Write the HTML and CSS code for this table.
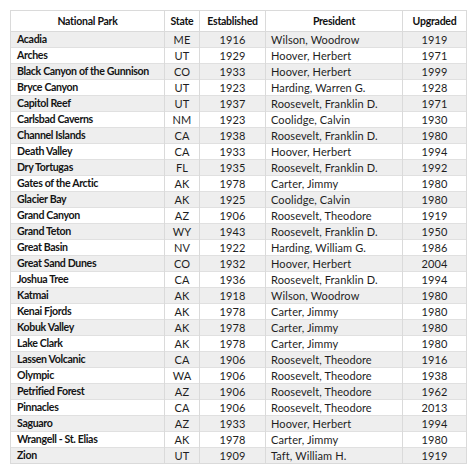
FILE: index.html
```html
<!DOCTYPE html>
<html>
<head>
<meta charset="utf-8">
<link rel="stylesheet" href="styles.css">
</head>
<body>
<table class="parks">
<colgroup>
<col class="c-park"><col class="c-state"><col class="c-est"><col class="c-pres"><col class="c-up">
</colgroup>
<thead>
<tr><th>National Park</th><th>State</th><th>Established</th><th>President</th><th>Upgraded</th></tr>
</thead>
<tbody>
<tr><td class="name">Acadia</td><td>ME</td><td>1916</td><td class="pres">Wilson, Woodrow</td><td>1919</td></tr>
<tr><td class="name">Arches</td><td>UT</td><td>1929</td><td class="pres">Hoover, Herbert</td><td>1971</td></tr>
<tr><td class="name">Black Canyon of the Gunnison</td><td>CO</td><td>1933</td><td class="pres">Hoover, Herbert</td><td>1999</td></tr>
<tr><td class="name">Bryce Canyon</td><td>UT</td><td>1923</td><td class="pres">Harding, Warren G.</td><td>1928</td></tr>
<tr><td class="name">Capitol Reef</td><td>UT</td><td>1937</td><td class="pres">Roosevelt, Franklin D.</td><td>1971</td></tr>
<tr><td class="name">Carlsbad Caverns</td><td>NM</td><td>1923</td><td class="pres">Coolidge, Calvin</td><td>1930</td></tr>
<tr><td class="name">Channel Islands</td><td>CA</td><td>1938</td><td class="pres">Roosevelt, Franklin D.</td><td>1980</td></tr>
<tr><td class="name">Death Valley</td><td>CA</td><td>1933</td><td class="pres">Hoover, Herbert</td><td>1994</td></tr>
<tr><td class="name">Dry Tortugas</td><td>FL</td><td>1935</td><td class="pres">Roosevelt, Franklin D.</td><td>1992</td></tr>
<tr><td class="name">Gates of the Arctic</td><td>AK</td><td>1978</td><td class="pres">Carter, Jimmy</td><td>1980</td></tr>
<tr><td class="name">Glacier Bay</td><td>AK</td><td>1925</td><td class="pres">Coolidge, Calvin</td><td>1980</td></tr>
<tr><td class="name">Grand Canyon</td><td>AZ</td><td>1906</td><td class="pres">Roosevelt, Theodore</td><td>1919</td></tr>
<tr><td class="name">Grand Teton</td><td>WY</td><td>1943</td><td class="pres">Roosevelt, Franklin D.</td><td>1950</td></tr>
<tr><td class="name">Great Basin</td><td>NV</td><td>1922</td><td class="pres">Harding, William G.</td><td>1986</td></tr>
<tr><td class="name">Great Sand Dunes</td><td>CO</td><td>1932</td><td class="pres">Hoover, Herbert</td><td>2004</td></tr>
<tr><td class="name">Joshua Tree</td><td>CA</td><td>1936</td><td class="pres">Roosevelt, Franklin D.</td><td>1994</td></tr>
<tr><td class="name">Katmai</td><td>AK</td><td>1918</td><td class="pres">Wilson, Woodrow</td><td>1980</td></tr>
<tr><td class="name">Kenai Fjords</td><td>AK</td><td>1978</td><td class="pres">Carter, Jimmy</td><td>1980</td></tr>
<tr><td class="name">Kobuk Valley</td><td>AK</td><td>1978</td><td class="pres">Carter, Jimmy</td><td>1980</td></tr>
<tr><td class="name">Lake Clark</td><td>AK</td><td>1978</td><td class="pres">Carter, Jimmy</td><td>1980</td></tr>
<tr><td class="name">Lassen Volcanic</td><td>CA</td><td>1906</td><td class="pres">Roosevelt, Theodore</td><td>1916</td></tr>
<tr><td class="name">Olympic</td><td>WA</td><td>1906</td><td class="pres">Roosevelt, Theodore</td><td>1938</td></tr>
<tr><td class="name">Petrified Forest</td><td>AZ</td><td>1906</td><td class="pres">Roosevelt, Theodore</td><td>1962</td></tr>
<tr><td class="name">Pinnacles</td><td>CA</td><td>1906</td><td class="pres">Roosevelt, Theodore</td><td>2013</td></tr>
<tr><td class="name">Saguaro</td><td>AZ</td><td>1933</td><td class="pres">Hoover, Herbert</td><td>1994</td></tr>
<tr><td class="name">Wrangell - St. Elias</td><td>AK</td><td>1978</td><td class="pres">Carter, Jimmy</td><td>1980</td></tr>
<tr><td class="name">Zion</td><td>UT</td><td>1909</td><td class="pres">Taft, William H.</td><td>1919</td></tr>
</tbody>
</table>
</body>
</html>
```
FILE: styles.css
```css
html, body {
  margin: 0;
  padding: 0;
  background: #ffffff;
}
body {
  padding: 10px 0 0 10px;
  font-family: Lato, "Liberation Sans", sans-serif;
  font-size: 11px;
  letter-spacing: 0.1px;
  color: #1e1e1e;
}
.parks {
  border-collapse: collapse;
  table-layout: fixed;
  width: 456px;
  border: 1px solid #dadada;
}
.c-park { width: 154px; }
.c-state { width: 35px; }
.c-est { width: 66px; }
.c-pres { width: 137px; }
.c-up { width: 64px; }
.parks th {
  height: 20px;
  padding: 0;
  font-size: 10.5px;
  letter-spacing: -0.25px;
  font-weight: bold;
  color: #111;
  text-align: center;
  border: 1px solid #dadada;
  background: #fff;
}
.parks td {
  height: 15px;
  padding: 0;
  line-height: 15px;
  text-align: center;
  border-left: 1px solid #dadada;
  border-right: 1px solid #dadada;
  border-top: 1px solid #e0e0e0;
  white-space: nowrap;
  overflow: hidden;
}
.parks tbody tr:nth-child(odd) td {
  background: #eeeeee;
}
.parks td.name {
  text-align: left;
  padding-left: 6px;
  font-size: 10.6px;
  letter-spacing: -0.35px;
  font-weight: bold;
  color: #141414;
}
.parks td.pres {
  text-align: left;
  padding-left: 5px;
}
```
